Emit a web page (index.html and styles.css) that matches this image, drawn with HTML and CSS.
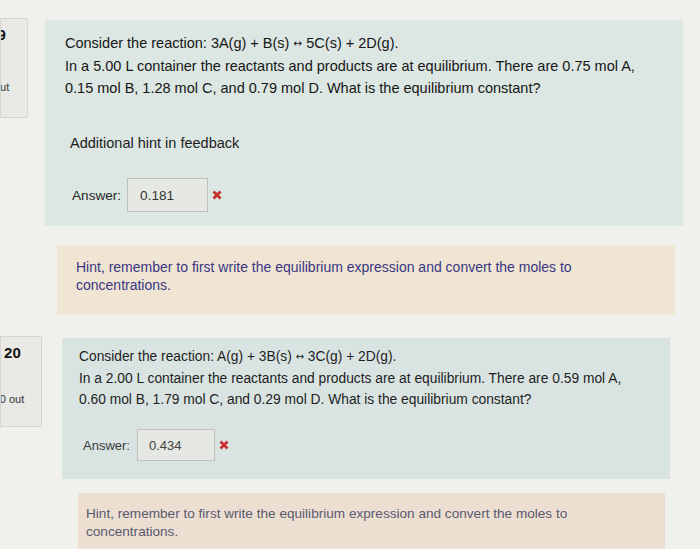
FILE: index.html
```html
<!DOCTYPE html>
<html lang="en">
<head>
<meta charset="utf-8">
<title>Quiz</title>
<link rel="stylesheet" href="styles.css">
</head>
<body>
<div class="page">
  <div class="que que-first">
    <div class="info info-first">
      <div class="info-inner">
        <h3 class="qno-line">Question <span class="qno">19</span></h3>
        <div class="state">Incorrect</div>
        <div class="grade">Mark 0.00 out of 1.00</div>
      </div>
    </div>
    <div class="content content-first">
      <div class="formulation">
        <div class="qtext">Consider the reaction: 3A(g) + B(s) <span class="arrow">↔</span> 5C(s) + 2D(g).<br>In a 5.00 L container the reactants and products are at equilibrium. There are 0.75 mol A, 0.15 mol B, 1.28 mol C, and 0.79 mol D. What is the equilibrium constant?</div>
        <p class="addl">Additional hint in feedback</p>
        <div class="ablock">
          <label class="alabel">Answer:</label>
          <span class="answer-input">0.181</span>
          <svg class="xicon" viewBox="0 0 10 10" aria-hidden="true"><path d="M1.5 1.5 L8.5 8.5 M8.5 1.5 L1.5 8.5"/></svg>
        </div>
      </div>
      <div class="outcome">Hint, remember to first write the equilibrium expression and convert the moles to concentrations.</div>
    </div>
  </div>

  <div class="que que-second">
    <div class="info info-second">
      <div class="info-inner">
        <h3 class="qno-line">Question <span class="qno">20</span></h3>
        <div class="state">Incorrect</div>
        <div class="grade">Mark 0.00 out of 1.00</div>
      </div>
    </div>
    <div class="content content-second">
      <div class="formulation">
        <div class="qtext">Consider the reaction: A(g) + 3B(s) <span class="arrow">↔</span> 3C(g) + 2D(g).<br>In a 2.00 L container the reactants and products are at equilibrium. There are 0.59 mol A, 0.60 mol B, 1.79 mol C, and 0.29 mol D. What is the equilibrium constant?</div>
        <div class="ablock">
          <label class="alabel">Answer:</label>
          <span class="answer-input">0.434</span>
          <svg class="xicon" viewBox="0 0 10 10" aria-hidden="true"><path d="M1.5 1.5 L8.5 8.5 M8.5 1.5 L1.5 8.5"/></svg>
        </div>
      </div>
      <div class="outcome">Hint, remember to first write the equilibrium expression and convert the moles to concentrations.</div>
    </div>
  </div>
</div>
</body>
</html>
```

FILE: styles.css
```css
html, body {
  margin: 0;
  padding: 0;
}
body {
  background: #f0f0ec;
  font-family: "Liberation Sans", Arial, sans-serif;
  color: #222;
  height: 549px;
  overflow: hidden;
}

.que {
  display: flex;
  align-items: flex-start;
}
.que-first {
  padding-top: 18px;
  gap: 17px;
}
.que-second {
  padding-top: 21px;
  gap: 20px;
}

/* info box on the left (clipped by the screen edge) */
.info {
  flex: none;
  box-sizing: border-box;
  background: #e9e9e5;
  border: 1px solid #d6d6d1;
  display: flex;
  justify-content: flex-end;
  overflow: hidden;
  padding: 6px 12px 0 0;
}
.info-first {
  width: 28px;
  height: 100px;
  padding-right: 13px;
}
.info-second {
  width: 42px;
  height: 91px;
}
.info-inner {
  flex: none;
  width: 72px;
  font-size: 11px;
  color: #333;
}
.qno-line {
  margin: 0;
  font-size: 11px;
  font-weight: normal;
  line-height: 20px;
}
.qno {
  font-size: 15px;
  font-weight: bold;
  color: #111;
}
.state {
  line-height: 28px;
}
.grade {
  line-height: 15px;
}
.info-first .grade {
  margin-top: 6px;
}

/* main content */
.content {
  flex: none;
  margin-top: 2px;
}
.content-first {
  width: 638px;
}
.content-second {
  width: 608px;
}

.formulation {
  background: #dce6e2;
  box-sizing: border-box;
}
.content-first .formulation {
  padding: 12px 30px 14px 20px;
}
.content-second .formulation {
  padding: 8px 30px 18px 17px;
  background: #d9e4e2;
}

.qtext {
  font-size: 14.5px;
  line-height: 22px;
  color: #161616;
}
.content-second .qtext {
  font-size: 13.8px;
  line-height: 21px;
  color: #1e1e1e;
}
.arrow {
  font-family: "DejaVu Sans", sans-serif;
  font-size: 0.72em;
  position: relative;
  top: -1px;
}

.addl {
  margin: 33px 0 0 5px;
  font-size: 14.5px;
  line-height: 22px;
  color: #1c1c1c;
}

.ablock {
  display: flex;
  align-items: center;
  margin-top: 24px;
  margin-left: 7px;
}
.content-second .ablock {
  margin-top: 19px;
  margin-left: 4px;
}
.alabel {
  font-size: 13.6px;
  color: #262626;
  margin-right: 6px;
}
.content-second .alabel {
  font-size: 13px;
  color: #3a3a3a;
  margin-right: 7px;
}
.answer-input {
  box-sizing: border-box;
  width: 81px;
  height: 34px;
  display: flex;
  align-items: center;
  padding-left: 12px;
  background: #e5e8e3;
  border: 1px solid #bfc2bc;
  font-size: 13.6px;
  color: #333;
}
.content-second .answer-input {
  width: 78px;
  height: 32px;
  padding-left: 11px;
  font-size: 13px;
  color: #444;
}
.xicon {
  width: 10px;
  height: 10px;
  margin-left: 4px;
  fill: none;
  stroke: #c8302c;
  stroke-width: 2.8;
}

/* hint feedback box */
.outcome {
  box-sizing: border-box;
  background: #efe5d2;
  color: #3a3684;
  font-size: 14px;
  line-height: 18px;
}
.content-first .outcome {
  width: 618px;
  margin: 19px 0 0 12px;
  padding: 13px 60px 21px 19px;
}
.content-second .outcome {
  width: 587px;
  margin: 14px 0 0 16px;
  padding: 12px 40px 20px 8px;
  background: #ecdfd2;
  color: #5a596e;
  font-size: 13.6px;
}
```
